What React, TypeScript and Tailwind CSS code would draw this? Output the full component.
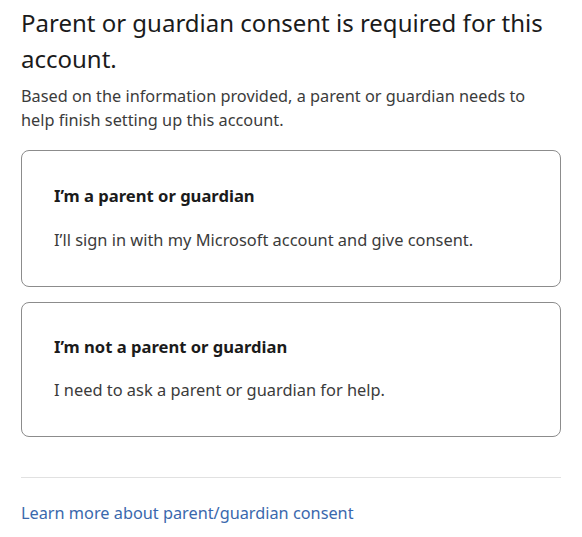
export default function App() {
  return (
    <div className="w-[582px] h-[537px] bg-white px-[21px] pt-[5px] text-[#1b1b1b] font-['Segoe_UI','Noto_Sans',sans-serif]">
      <h1 className="text-[24px] leading-[36px] font-normal text-[#1b1b1b]">
        Parent or guardian consent is required for this account.
      </h1>
      <p className="mt-[7px] text-[16.3px] leading-[24px] text-[#3b3b3b]">
        Based on the information provided, a parent or guardian needs to help finish setting up this account.
      </p>

      <div className="mt-[18px] flex flex-col gap-[15px]">
        <button className="w-full text-left rounded-lg border border-[#8c8c8c] px-8 pt-[33px] pb-[34px] bg-white">
          <div className="text-[16.6px] leading-[24px] font-bold text-[#1b1b1b]">I’m a parent or guardian</div>
          <div className="mt-[20px] text-[16.4px] leading-[24px] text-[#3b3b3b]">
            I’ll sign in with my Microsoft account and give consent.
          </div>
        </button>
        <button className="w-full text-left rounded-lg border border-[#8c8c8c] px-8 pt-[32px] pb-[34px] bg-white">
          <div className="text-[16.6px] leading-[24px] font-bold text-[#1b1b1b]">I’m not a parent or guardian</div>
          <div className="mt-[19px] text-[16.4px] leading-[24px] text-[#3b3b3b]">
            I need to ask a parent or guardian for help.
          </div>
        </button>
      </div>

      <div className="mt-[40px] border-t border-[#e1e1e1]" />
      <a href="#" className="block mt-[23px] text-[16.3px] leading-[24px] text-[#3a68ad]">
        Learn more about parent/guardian consent
      </a>
    </div>
  );
}
